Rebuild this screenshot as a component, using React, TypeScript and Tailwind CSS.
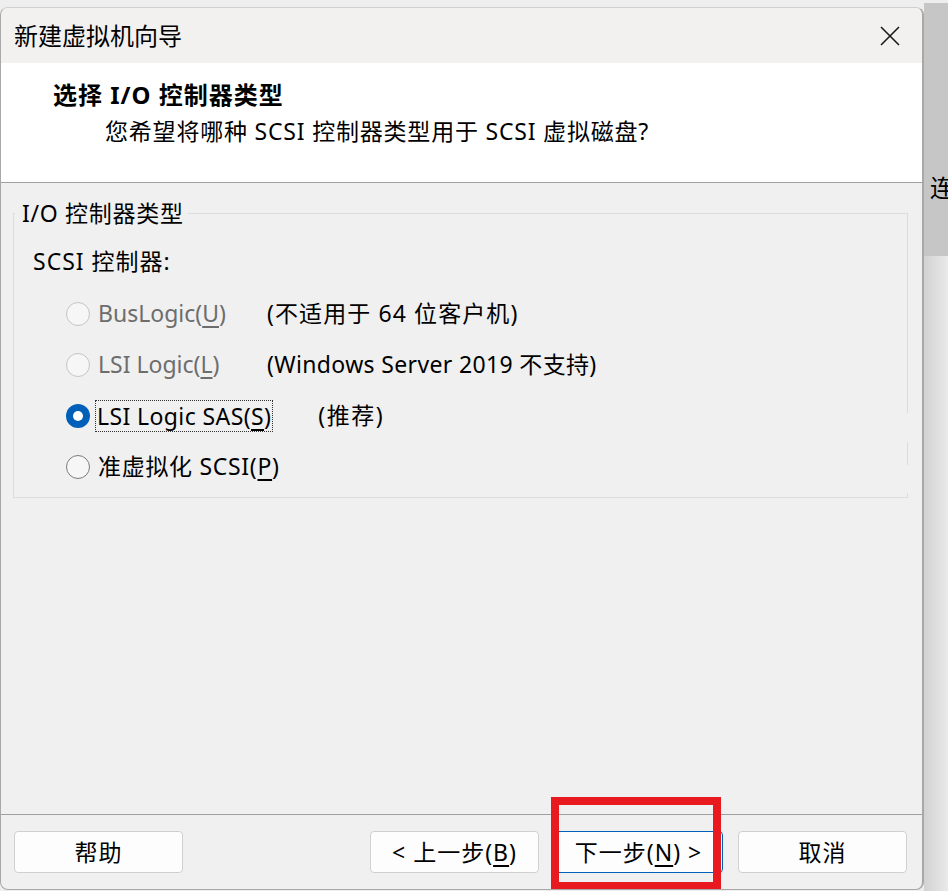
import React from "react";

function Radio({ state }: { state: "disabled" | "checked" | "off" }) {
  if (state === "checked") {
    return (
      <span className="flex h-[24px] w-[24px] shrink-0 items-center justify-center rounded-full bg-[#005fb8]">
        <span className="h-[10px] w-[10px] rounded-full bg-white" />
      </span>
    );
  }
  return (
    <span
      className={
        state === "disabled"
          ? "h-[24px] w-[24px] shrink-0 rounded-full border border-[#c4c4c4] bg-[#f6f6f6]"
          : "h-[24px] w-[24px] shrink-0 rounded-full border border-[#7a7a7a] bg-[#f6f6f6]"
      }
    />
  );
}

function Button({ children, primary }: { children: React.ReactNode; primary?: boolean }) {
  return (
    <button
      className={
        primary
          ? "flex h-[42px] w-[169px] items-center justify-center rounded-[4px] border border-[#005fb8] bg-[#fdfdfd] text-[23px] tracking-[1px] text-black"
          : "flex h-[42px] w-[169px] items-center justify-center rounded-[4px] border border-[#d0d0d0] bg-[#fdfdfd] text-[23px] tracking-[1px] text-black"
      }
    >
      {children}
    </button>
  );
}

export default function App() {
  return (
    <div className="flex h-[891px] w-[948px] overflow-hidden bg-[#eeeeee] font-['Noto_Sans','Noto_Sans_CJK_SC',sans-serif] text-black">
      {/* Wizard window */}
      <div className="mt-[7px] flex h-[883px] w-[924px] shrink-0 flex-col overflow-hidden rounded-[8px] border border-r-2 border-[#a8a8a8] border-t-[#cfcfcf] bg-[#f0f0f0]">
        {/* Title bar */}
        <div className="flex h-[55px] shrink-0 items-center justify-between bg-[#f3f1f0] pl-[13px] pr-[22px]">
          <span className="text-[24px] leading-none">新建虚拟机向导</span>
          <svg width="20" height="20" viewBox="0 0 20 20" className="mt-[1px]">
            <path d="M1 1 L19 19 M19 1 L1 19" stroke="#1a1a1a" strokeWidth="1.6" fill="none" />
          </svg>
        </div>

        {/* Header */}
        <div className="h-[120px] shrink-0 border-b border-[#a0a0a0] bg-white pl-[52px] pt-[17px]">
          <div className="text-[24px] font-bold leading-[30px] tracking-[1px]">选择 I/O 控制器类型</div>
          <div className="mt-[6px] pl-[52px] text-[23px] leading-[30px] tracking-[0.8px]">
            您希望将哪种 SCSI 控制器类型用于 SCSI 虚拟磁盘?
          </div>
        </div>

        {/* Body */}
        <div className="flex-1 px-[12px] pt-[15px]">
          <fieldset className="relative w-[895px] border border-[#dcdcdc] pb-[5px]">
            <legend className="ml-[1px] pl-[7px] pr-[4px] text-[23px] leading-[30px] tracking-[0.7px]">I/O 控制器类型</legend>
            <div className="mt-[18px] pl-[19px] text-[23px] leading-[30px] tracking-[1px]">SCSI 控制器:</div>

            <div className="mt-[12px] pl-[52px] text-[23px]">
              <div className="flex h-[51px] items-center">
                <div className="flex w-[201px] items-center gap-[7px]">
                  <Radio state="disabled" />
                  <span className="px-[1px] text-[#6d6d6d]">
                    BusLogic(<span className="underline underline-offset-4">U</span>)
                  </span>
                </div>
                <span className="tracking-[1.1px]">(不适用于 64 位客户机)</span>
              </div>

              <div className="flex h-[51px] items-center">
                <div className="flex w-[201px] items-center gap-[7px]">
                  <Radio state="disabled" />
                  <span className="px-[1px] text-[#6d6d6d]">
                    LSI Logic(<span className="underline underline-offset-4">L</span>)
                  </span>
                </div>
                <span className="tracking-[0.35px]">(Windows Server 2019 不支持)</span>
              </div>

              <div className="flex h-[51px] items-center">
                <div className="flex items-center gap-[6px]">
                  <Radio state="checked" />
                  <span className="px-[1px] leading-[30px] tracking-[0.4px] outline-1 outline-dotted outline-[#333]">
                    LSI Logic SAS(<span className="underline underline-offset-4">S</span>)
                  </span>
                </div>
                <span className="pl-[46px] tracking-[1.5px]">(推荐)</span>
              </div>

              <div className="flex h-[51px] items-center">
                <div className="flex items-center gap-[7px]">
                  <Radio state="off" />
                  <span className="px-[1px] tracking-[0.7px]">
                    准虚拟化 SCSI(<span className="underline underline-offset-4">P</span>)
                  </span>
                </div>
              </div>
            </div>

            {/* repaint gaps on the right edge */}
            <div className="absolute right-[-1px] top-[185px] h-[29px] w-[2px] bg-[#f0f0f0]" />
            <div className="absolute right-[-1px] top-[237px] h-[28px] w-[2px] bg-[#f0f0f0]" />
          </fieldset>
        </div>

        {/* Footer */}
        <div className="flex h-[75px] shrink-0 items-start border-t border-[#a0a0a0] pl-[13px] pt-[16px]">
          <Button>帮助</Button>
          <div className="ml-[187px]">
            <Button>
              &lt; 上一步(<span className="underline underline-offset-4">B</span>)
            </Button>
          </div>
          <div className="relative ml-[15px]">
            <Button primary>
              下一步(<span className="underline underline-offset-4">N</span>) &gt;
            </Button>
            <div className="pointer-events-none absolute left-[-3px] top-[-34px] h-[93px] w-[170px] border-[8px] border-[#e8191f]" />
          </div>
          <div className="ml-[15px]">
            <Button>取消</Button>
          </div>
        </div>
      </div>

      {/* Background window peeking at the right */}
      <div className="flex flex-1 flex-col">
        <div className="h-[3px] bg-[#eeeeee]" />
        <div className="flex h-[253px] items-center overflow-hidden bg-[#c6c6c6] pl-[6px]">
          <span className="mt-[116px] text-[24px] leading-none whitespace-nowrap">连</span>
        </div>
        <div className="flex-1 bg-gradient-to-r from-[#d2d2d2] to-[#efefef]" />
      </div>
    </div>
  );
}
